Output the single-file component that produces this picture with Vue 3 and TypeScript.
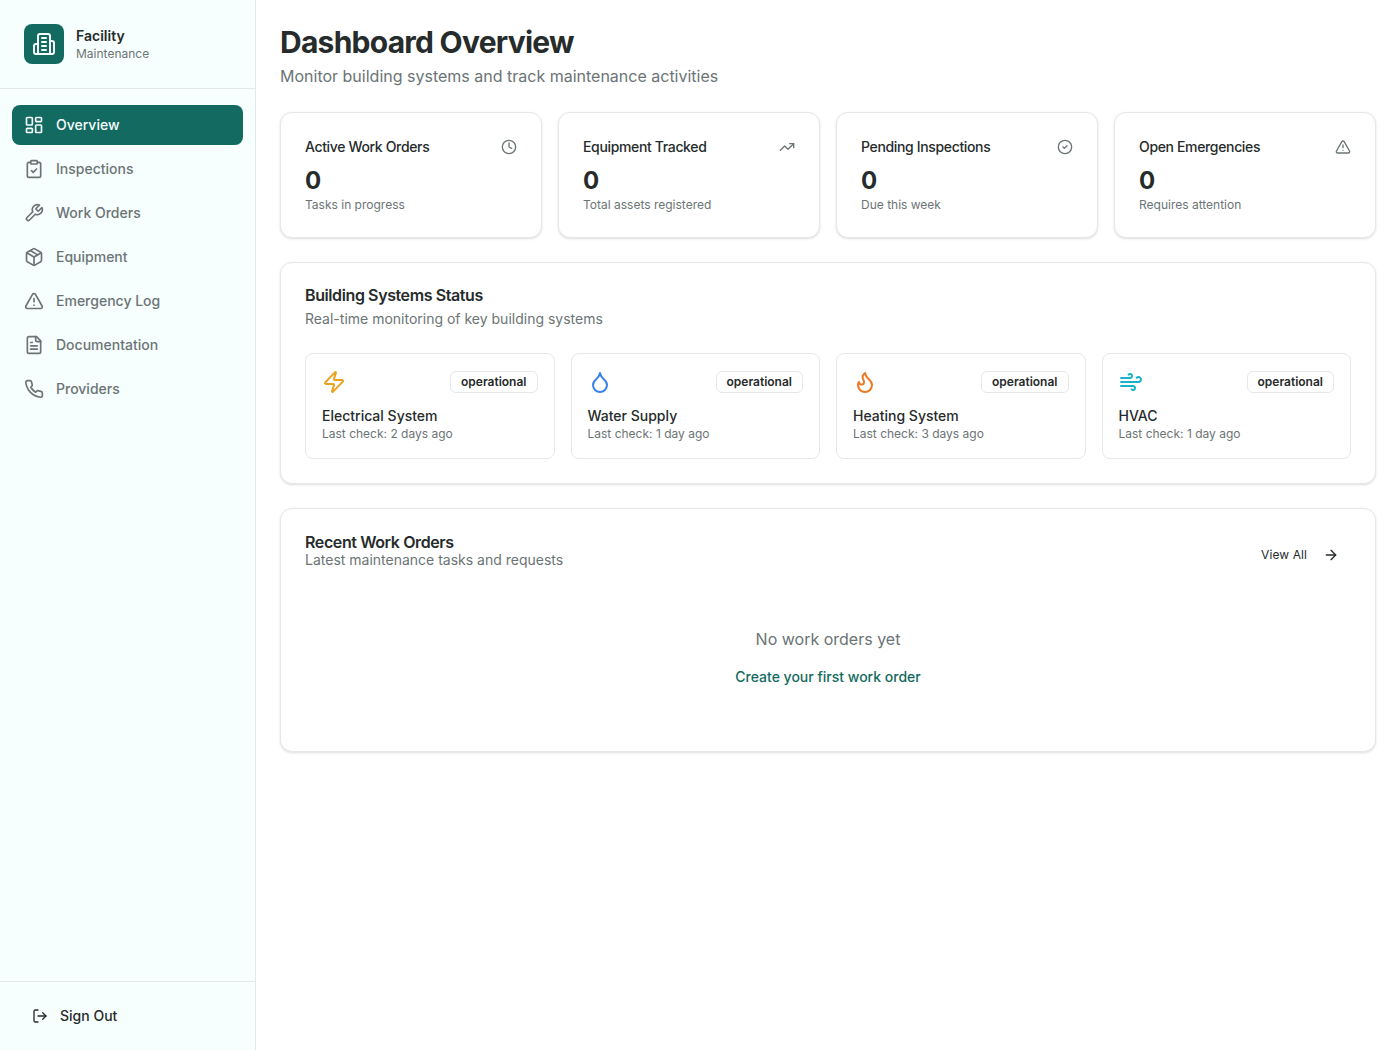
<script setup lang="ts">
import { h, type FunctionalComponent } from 'vue'

type Shape = [string, Record<string, string | number>]

const p = (d: string): Shape => ['path', { d }]
const ICONS: Record<string, Shape[]> = {
  building: [p('M6 22V4a2 2 0 0 1 2-2h8a2 2 0 0 1 2 2v18Z'), p('M6 12H4a2 2 0 0 0-2 2v6a2 2 0 0 0 2 2h2'), p('M18 9h2a2 2 0 0 1 2 2v9a2 2 0 0 1-2 2h-2'), p('M10 6h4'), p('M10 10h4'), p('M10 14h4'), p('M10 18h4')],
  dashboard: [['rect', { x: 3, y: 3, width: 7, height: 9, rx: 1 }], ['rect', { x: 14, y: 3, width: 7, height: 5, rx: 1 }], ['rect', { x: 14, y: 12, width: 7, height: 9, rx: 1 }], ['rect', { x: 3, y: 16, width: 7, height: 5, rx: 1 }]],
  clipboard: [['rect', { x: 8, y: 2, width: 8, height: 4, rx: 1 }], p('M16 4h2a2 2 0 0 1 2 2v14a2 2 0 0 1-2 2H6a2 2 0 0 1-2-2V6a2 2 0 0 1 2-2h2'), p('m9 14 2 2 4-4')],
  wrench: [p('M14.7 6.3a1 1 0 0 0 0 1.4l1.6 1.6a1 1 0 0 0 1.4 0l3.77-3.77a6 6 0 0 1-7.94 7.94l-6.91 6.91a2.12 2.12 0 0 1-3-3l6.91-6.91a6 6 0 0 1 7.94-7.94l-3.76 3.76z')],
  package: [p('m7.5 4.27 9 5.15'), p('M21 8a2 2 0 0 0-1-1.73l-7-4a2 2 0 0 0-2 0l-7 4A2 2 0 0 0 3 8v8a2 2 0 0 0 1 1.73l7 4a2 2 0 0 0 2 0l7-4A2 2 0 0 0 21 16Z'), p('m3.3 7 8.7 5 8.7-5'), p('M12 22V12')],
  alert: [p('m21.73 18-8-14a2 2 0 0 0-3.48 0l-8 14A2 2 0 0 0 4 21h16a2 2 0 0 0 1.73-3Z'), p('M12 9v4'), p('M12 17h.01')],
  file: [p('M15 2H6a2 2 0 0 0-2 2v16a2 2 0 0 0 2 2h12a2 2 0 0 0 2-2V7Z'), p('M14 2v4a2 2 0 0 0 2 2h4'), p('M10 9H8'), p('M16 13H8'), p('M16 17H8')],
  phone: [p('M22 16.92v3a2 2 0 0 1-2.18 2 19.79 19.79 0 0 1-8.63-3.07 19.5 19.5 0 0 1-6-6 19.79 19.79 0 0 1-3.07-8.67A2 2 0 0 1 4.11 2h3a2 2 0 0 1 2 1.72 12.84 12.84 0 0 0 .7 2.81 2 2 0 0 1-.45 2.11L8.09 9.91a16 16 0 0 0 6 6l1.27-1.27a2 2 0 0 1 2.11-.45 12.84 12.84 0 0 0 2.81.7A2 2 0 0 1 22 16.92z')],
  logout: [p('M9 21H5a2 2 0 0 1-2-2V5a2 2 0 0 1 2-2h4'), p('m16 17 5-5-5-5'), p('M21 12H9')],
  clock: [['circle', { cx: 12, cy: 12, r: 10 }], p('M12 6v6l4 2')],
  trending: [p('M22 7l-8.5 8.5-5-5L2 17'), p('M16 7h6v6')],
  check: [['circle', { cx: 12, cy: 12, r: 10 }], p('m9 12 2 2 4-4')],
  zap: [p('M4 14a1 1 0 0 1-.78-1.63l9.9-10.2a.5.5 0 0 1 .86.46l-1.92 6.02A1 1 0 0 0 13 10h7a1 1 0 0 1 .78 1.63l-9.9 10.2a.5.5 0 0 1-.86-.46l1.92-6.02A1 1 0 0 0 11 14z')],
  droplet: [p('M12 22a7 7 0 0 0 7-7c0-2-1-3.9-3-5.5s-3.5-4-4-6.5c-.5 2.5-2 4.9-4 6.5C6 11.1 5 13 5 15a7 7 0 0 0 7 7z')],
  flame: [p('M8.5 14.5A2.5 2.5 0 0 0 11 12c0-1.38-.5-2-1-3-1.072-2.143-.224-4.054 2-6 .5 2.5 2 4.9 4 6.5 2 1.6 3 3.5 3 5.5a7 7 0 1 1-14 0c0-1.153.433-2.294 1-3a2.5 2.5 0 0 0 2.5 2.5z')],
  wind: [p('M17.7 7.7a2.5 2.5 0 1 1 1.8 4.3H2'), p('M9.6 4.6A2 2 0 1 1 11 8H2'), p('M12.6 19.4A2 2 0 1 0 14 16H2')],
  arrow: [p('M5 12h14'), p('m12 5 7 7-7 7')],
}

const Icon: FunctionalComponent<{ name: string; size: number }> = (props) =>
  h(
    'svg',
    {
      xmlns: 'http://www.w3.org/2000/svg',
      width: props.size,
      height: props.size,
      viewBox: '0 0 24 24',
      fill: 'none',
      stroke: 'currentColor',
      'stroke-width': 2,
      'stroke-linecap': 'round',
      'stroke-linejoin': 'round',
    },
    ICONS[props.name].map(([tag, attrs]) => h(tag, attrs)),
  )
Icon.props = ['name', 'size']

const navItems = [
  { label: 'Overview', icon: 'dashboard', active: true },
  { label: 'Inspections', icon: 'clipboard', active: false },
  { label: 'Work Orders', icon: 'wrench', active: false },
  { label: 'Equipment', icon: 'package', active: false },
  { label: 'Emergency Log', icon: 'alert', active: false },
  { label: 'Documentation', icon: 'file', active: false },
  { label: 'Providers', icon: 'phone', active: false },
]

const stats = [
  { title: 'Active Work Orders', icon: 'clock', value: 0, note: 'Tasks in progress' },
  { title: 'Equipment Tracked', icon: 'trending', value: 0, note: 'Total assets registered' },
  { title: 'Pending Inspections', icon: 'check', value: 0, note: 'Due this week' },
  { title: 'Open Emergencies', icon: 'alert', value: 0, note: 'Requires attention' },
]

const systems = [
  { name: 'Electrical System', icon: 'zap', tone: 'amber', check: 'Last check: 2 days ago' },
  { name: 'Water Supply', icon: 'droplet', tone: 'blue', check: 'Last check: 1 day ago' },
  { name: 'Heating System', icon: 'flame', tone: 'orange', check: 'Last check: 3 days ago' },
  { name: 'HVAC', icon: 'wind', tone: 'cyan', check: 'Last check: 1 day ago' },
]
</script>

<template>
  <div class="app">
    <aside class="sidebar">
      <div class="brand">
        <div class="logo"><Icon name="building" :size="24" /></div>
        <div>
          <div class="brand-name">Facility</div>
          <div class="brand-sub">Maintenance</div>
        </div>
      </div>
      <nav class="nav">
        <a v-for="item in navItems" :key="item.label" class="nav-item" :class="{ active: item.active }">
          <Icon :name="item.icon" :size="20" />
          <span>{{ item.label }}</span>
        </a>
      </nav>
      <div class="side-foot">
        <button class="signout" type="button">
          <Icon name="logout" :size="16" />
          <span>Sign Out</span>
        </button>
      </div>
    </aside>

    <main class="main">
      <header class="page-head">
        <h1>Dashboard Overview</h1>
        <p>Monitor building systems and track maintenance activities</p>
      </header>

      <section class="stats">
        <div v-for="s in stats" :key="s.title" class="card stat">
          <div class="stat-top">
            <span class="stat-title">{{ s.title }}</span>
            <Icon class="stat-icon" :name="s.icon" :size="16" />
          </div>
          <div class="stat-value">{{ s.value }}</div>
          <div class="stat-note">{{ s.note }}</div>
        </div>
      </section>

      <section class="card panel">
        <h2>Building Systems Status</h2>
        <p class="panel-sub">Real-time monitoring of key building systems</p>
        <div class="systems">
          <div v-for="sys in systems" :key="sys.name" class="system">
            <div class="system-top">
              <Icon :class="sys.tone" :name="sys.icon" :size="24" />
              <span class="badge">operational</span>
            </div>
            <div class="system-name">{{ sys.name }}</div>
            <div class="system-check">{{ sys.check }}</div>
          </div>
        </div>
      </section>

      <section class="card panel orders">
        <div class="orders-head">
          <div>
            <h2 class="orders-title">Recent Work Orders</h2>
            <p class="orders-sub">Latest maintenance tasks and requests</p>
          </div>
          <button class="view-all" type="button">
            <span>View All</span>
            <Icon name="arrow" :size="16" />
          </button>
        </div>
        <div class="empty">
          <p>No work orders yet</p>
          <a>Create your first work order</a>
        </div>
      </section>
    </main>
  </div>
</template>

<style>
html,
body {
  margin: 0;
  background: #fff;
}
</style>

<style scoped>
* {
  box-sizing: border-box;
}
.app {
  display: flex;
  height: 1050px;
  overflow: hidden;
  font-family: Inter, "Liberation Sans", sans-serif;
  color: #262b2b;
}
.sidebar {
  width: 256px;
  flex: none;
  display: flex;
  flex-direction: column;
  background: #f7fefe;
  border-right: 1px solid #e4e8e9;
}
.brand {
  height: 89px;
  flex: none;
  display: flex;
  align-items: center;
  gap: 12px;
  padding: 0 24px;
  border-bottom: 1px solid #e4e8e9;
}
.logo {
  width: 40px;
  height: 40px;
  border-radius: 8px;
  background: #136a60;
  color: #f7fefe;
  display: flex;
  align-items: center;
  justify-content: center;
}
.brand-name {
  font-size: 14px;
  line-height: 20px;
  font-weight: 600;
}
.brand-sub {
  font-size: 12px;
  line-height: 16px;
  color: #6b7475;
}
.nav {
  flex: 1;
  display: flex;
  flex-direction: column;
  gap: 4px;
  padding: 16px 12px;
}
.nav-item {
  height: 40px;
  display: flex;
  align-items: center;
  gap: 12px;
  padding: 0 12px;
  border-radius: 8px;
  font-size: 14px;
  line-height: 20px;
  font-weight: 500;
  color: #6b7475;
}
.nav-item.active {
  background: #136a60;
  color: #f7fefe;
}
.side-foot {
  padding: 16px;
  border-top: 1px solid #e4e8e9;
}
.signout {
  width: 100%;
  height: 36px;
  display: flex;
  align-items: center;
  gap: 12px;
  padding: 0 16px;
  border: 0;
  background: none;
  border-radius: 8px;
  font: inherit;
  font-size: 14px;
  line-height: 20px;
  font-weight: 500;
  color: #262b2b;
}
.main {
  flex: 1;
  min-width: 0;
  padding: 24px;
  display: flex;
  flex-direction: column;
  gap: 24px;
}
.page-head h1 {
  margin: 0;
  font-size: 30px;
  line-height: 36px;
  font-weight: 700;
  letter-spacing: -0.75px;
}
.page-head p {
  margin: 4px 0 0;
  font-size: 16px;
  line-height: 24px;
  color: #6b7475;
}
.card {
  background: #fff;
  border: 1px solid #e4e8e9;
  border-radius: 12px;
  box-shadow: 0 1px 3px rgba(0, 0, 0, 0.1), 0 1px 2px -1px rgba(0, 0, 0, 0.1);
}
.stats {
  display: grid;
  grid-template-columns: repeat(4, 1fr);
  gap: 16px;
}
.stat {
  height: 126px;
  padding: 24px;
}
.stat-top {
  display: flex;
  align-items: center;
  justify-content: space-between;
  height: 20px;
}
.stat-title {
  font-size: 14px;
  line-height: 20px;
  font-weight: 500;
  letter-spacing: -0.35px;
}
.stat-icon {
  color: #6b7475;
}
.stat-value {
  margin-top: 8px;
  font-size: 24px;
  line-height: 32px;
  font-weight: 700;
}
.stat-note {
  font-size: 12px;
  line-height: 16px;
  color: #6b7475;
}
.panel {
  padding: 24px;
}
.panel h2 {
  margin: 0;
  font-size: 16px;
  line-height: 16px;
  font-weight: 600;
  letter-spacing: -0.4px;
}
.panel-sub {
  margin: 6px 0 0;
  font-size: 14px;
  line-height: 20px;
  color: #6b7475;
}
.systems {
  display: grid;
  grid-template-columns: repeat(4, 1fr);
  gap: 16px;
  margin-top: 24px;
}
.system {
  height: 106px;
  padding: 16px;
  border: 1px solid #e4e8e9;
  border-radius: 8px;
}
.system-top {
  display: flex;
  align-items: center;
  justify-content: space-between;
  height: 24px;
  margin-bottom: 12px;
}
.amber {
  color: #eaa221;
}
.blue {
  color: #3b82e6;
}
.orange {
  color: #ea7a24;
}
.cyan {
  color: #17b4c9;
}
.badge {
  height: 22px;
  padding: 2px 10px;
  border: 1px solid #e4e8e9;
  border-radius: 6px;
  font-size: 12px;
  line-height: 16px;
  font-weight: 600;
}
.system-name {
  font-size: 14px;
  line-height: 20px;
  font-weight: 500;
}
.system-check {
  font-size: 12px;
  line-height: 16px;
  color: #6b7475;
}
.orders {
  height: 244px;
}
.orders-head {
  display: flex;
  align-items: flex-start;
  justify-content: space-between;
}
.orders-title {
  line-height: 18px !important;
}
.orders-sub {
  margin: 0;
  font-size: 14px;
  line-height: 18px;
  color: #6b7475;
}
.view-all {
  height: 36px;
  margin-top: 4px;
  display: flex;
  align-items: center;
  gap: 16px;
  padding: 0 12px;
  border: 0;
  background: none;
  font: inherit;
  font-size: 12px;
  line-height: 16px;
  font-weight: 400;
  letter-spacing: 0.08px;
  color: #262b2b;
}
.empty {
  margin-top: 54px;
  text-align: center;
}
.empty p {
  margin: 0;
  font-size: 16px;
  line-height: 24px;
  color: #6b7475;
}
.empty a {
  display: block;
  margin-top: 16px;
  font-size: 14px;
  line-height: 20px;
  font-weight: 500;
  color: #136a60;
}
</style>
